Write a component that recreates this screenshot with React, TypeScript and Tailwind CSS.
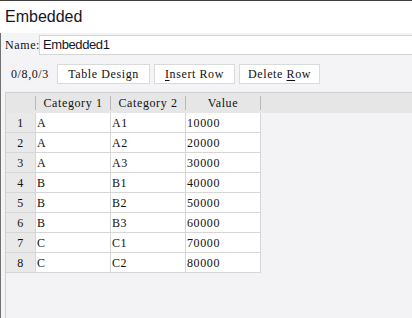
const rows = [
  ["A", "A1", "10000"],
  ["A", "A2", "20000"],
  ["A", "A3", "30000"],
  ["B", "B1", "40000"],
  ["B", "B2", "50000"],
  ["B", "B3", "60000"],
  ["C", "C1", "70000"],
  ["C", "C2", "80000"],
];

const serif = "font-['Liberation_Serif',serif] text-[12px] tracking-[0.6px] text-[#111]";

function HeadCell({ label, width }: { label: string; width: string }) {
  return (
    <div className={`flex h-[20px] items-center ${width}`}>
      <span className="flex-1 text-center">{label}</span>
      <div className="h-[14px] w-px bg-[#b8b8b8]" />
    </div>
  );
}

function ToolButton({ children, width }: { children: React.ReactNode; width: string }) {
  return (
    <button className={`flex h-[20px] items-center justify-center border border-[#dadada] bg-white leading-none ${width}`}>
      <span>{children}</span>
    </button>
  );
}

export default function App() {
  return (
    <div className="flex h-[318px] w-[412px] flex-col overflow-hidden border-t border-[#404040] bg-[#f4f4f6]">
      <div className="flex h-[32px] items-center bg-white pl-[5px] font-['Liberation_Sans',sans-serif] text-[16px] text-[#141428]">
        Embedded
      </div>
      <div className="flex flex-1 flex-col border-l border-[#707070]">
        <div className={`mt-[2px] flex h-[20px] items-center ${serif}`}>
          <span className="w-[38px] flex-none whitespace-nowrap pl-[4px]">Name:</span>
          <div className="flex h-[20px] flex-1 items-center border border-r-0 border-[#d4d4d4] bg-white pl-[3px] font-['Liberation_Sans',sans-serif] text-[13px] tracking-[-0.4px] text-[#141428]">
            Embedded1
          </div>
        </div>
        <div className={`mt-[9px] flex h-[20px] items-center gap-[4px] ${serif}`}>
          <span className="w-[52px] pl-[10px]">0/8,0/3</span>
          <ToolButton width="w-[93px]">Table Design</ToolButton>
          <ToolButton width="w-[81px]">
            <span className="underline underline-offset-2">I</span>nsert Row
          </ToolButton>
          <ToolButton width="w-[81px]">
            Delete <span className="underline underline-offset-2">R</span>ow
          </ToolButton>
        </div>
        <div className={`mt-[8px] ml-[4px] flex flex-1 flex-col border-t border-l border-[#d0d0d0] bg-[#f3f3f5] ${serif}`}>
          <div className="flex h-[20px] bg-[#e6e6e6]">
            <HeadCell label="" width="w-[30px]" />
            <HeadCell label="Category 1" width="w-[75px]" />
            <HeadCell label="Category 2" width="w-[75px]" />
            <HeadCell label="Value" width="w-[75px]" />
          </div>
          {rows.map((r, i) => (
            <div key={i} className="flex h-[20px]">
              <div className="flex w-[30px] items-center justify-center border-r border-b border-[#d6d6d6] bg-[#e9e9e9]">
                {i + 1}
              </div>
              {r.map((c, j) => (
                <div key={j} className="flex w-[75px] items-center border-r border-b border-[#d6d6d6] bg-white pl-[1px]">
                  {c}
                </div>
              ))}
            </div>
          ))}
        </div>
      </div>
    </div>
  );
}
